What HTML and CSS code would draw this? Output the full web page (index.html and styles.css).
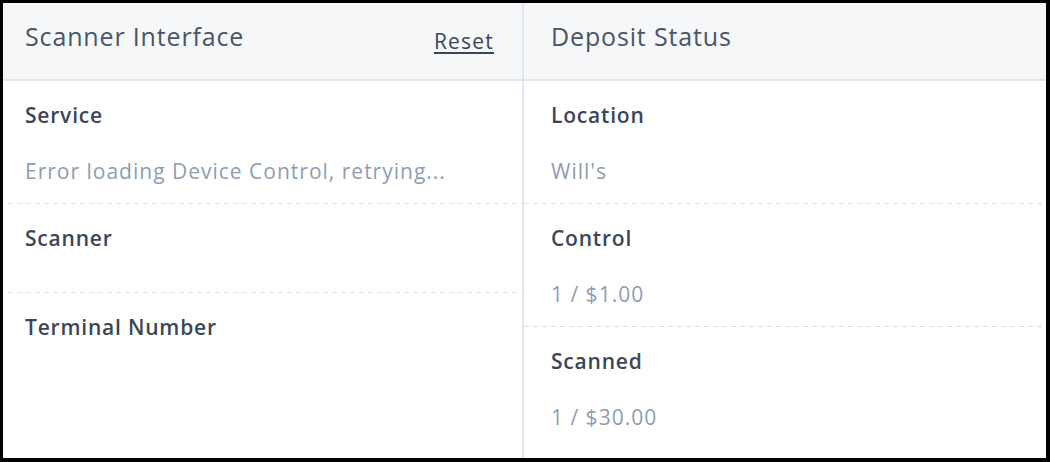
FILE: index.html
```html
<!DOCTYPE html>
<html lang="en">
<head>
<meta charset="utf-8">
<title>Scanner Interface</title>
<link rel="stylesheet" href="styles.css">
</head>
<body>
<div class="frame">
  <section class="panel panel-left">
    <header class="panel-head">
      <h2 class="panel-title">Scanner Interface</h2>
      <a class="reset" href="#">Reset</a>
    </header>
    <div class="fields">
      <div class="field">
        <div class="label">Service</div>
        <div class="value">Error loading Device Control, retrying...</div>
      </div>
      <div class="field">
        <div class="label">Scanner</div>
        <div class="value"></div>
      </div>
      <div class="field">
        <div class="label">Terminal Number</div>
        <div class="value"></div>
      </div>
    </div>
  </section>
  <section class="panel panel-right">
    <header class="panel-head">
      <h2 class="panel-title">Deposit Status</h2>
    </header>
    <div class="fields">
      <div class="field">
        <div class="label">Location</div>
        <div class="value">Will's</div>
      </div>
      <div class="field">
        <div class="label">Control</div>
        <div class="value">1 / $1.00</div>
      </div>
      <div class="field">
        <div class="label">Scanned</div>
        <div class="value">1 / $30.00</div>
      </div>
    </div>
  </section>
</div>
</body>
</html>
```
FILE: styles.css
```css
html, body {
  margin: 0;
  padding: 0;
  background: #ffffff;
}

body {
  font-family: "Open Sans", "Liberation Sans", sans-serif;
  color: #3c4657;
}

.frame {
  box-sizing: border-box;
  width: 1050px;
  height: 462px;
  border-style: solid;
  border-color: #000000;
  border-width: 3px 4px 4px 3px;
  background: #ffffff;
  display: grid;
  grid-template-columns: 521px 1fr;
  overflow: hidden;
}

.panel {
  display: flex;
  flex-direction: column;
  min-width: 0;
}

.panel-left {
  border-right: 2px solid #dfe6ef;
}

.panel-head {
  box-sizing: border-box;
  height: 78px;
  background: #f6f7f9;
  border-bottom: 2px solid #dfe6ef;
  display: flex;
  justify-content: space-between;
  align-items: flex-start;
}

.panel-left .panel-head {
  padding: 17px 28px 0 22px;
}

.panel-right .panel-head {
  padding: 17px 27px 0 27px;
}

.panel-title {
  margin: 0;
  font-size: 25px;
  line-height: 32px;
  letter-spacing: 0.85px;
  font-weight: 400;
  color: #4a5567;
}

.reset {
  margin-top: 9px;
  font-size: 21px;
  line-height: 24px;
  letter-spacing: 1.2px;
  color: #3c4657;
  text-decoration: underline;
  text-underline-offset: 3px;
}

.field {
  padding: 22px 0 20px;
}

.panel-left .field {
  padding-left: 22px;
}

.panel-right .field {
  padding-left: 27px;
}

.field + .field {
  padding-top: 22px;
  border-top: 1px solid transparent;
  background-image: repeating-linear-gradient(90deg, #d9e0e9 0 5px, transparent 5px 9px);
  background-size: 100% 1px;
  background-repeat: no-repeat;
  background-position: 0 0;
  background-origin: border-box;
}

.panel-left .field + .field {
  background-position: 5px 0;
  background-size: calc(100% - 5px) 1px;
}

.label {
  font-size: 21px;
  line-height: 24px;
  letter-spacing: 0.8px;
  font-weight: 600;
  color: #3c4657;
}

.value {
  margin-top: 32px;
  font-size: 21px;
  line-height: 24px;
  letter-spacing: 1px;
  color: #8e9db1;
}

.value:empty {
  margin-top: 22px;
}
```
